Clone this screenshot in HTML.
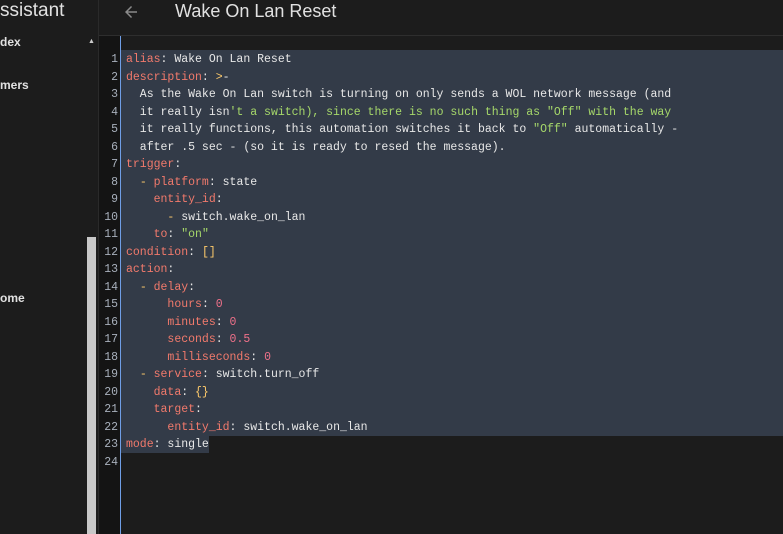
<!DOCTYPE html>
<html><head><style>
body{margin:0;width:783px;height:534px;overflow:hidden;background:#1c1c1c;font-family:"Liberation Sans",sans-serif;position:relative}
.side{position:absolute;left:0;top:0;width:98px;height:534px;background:#1c1c1c;border-right:1px solid #2a2a2a;color:#e1e1e1}
.hdr{position:absolute;left:99px;top:0;right:0;height:35px;background:#1c1c1c;border-bottom:1px solid #2e2e2e}
.sb{position:absolute;left:87px;top:237px;width:9px;height:297px;background:#c8c8c8}
.gut{position:absolute;left:99px;top:36px;width:21px;height:498px;background:#141414;border-right:1px solid #6f9ee6}
.code{position:absolute;left:126px;top:51px;font-family:"Liberation Mono",monospace;font-size:11.5px;line-height:17.52px;color:#e8e8e8;white-space:pre}
.ln{position:absolute;left:99px;top:51px;width:19px;text-align:right;font-family:"Liberation Mono",monospace;font-size:11.5px;line-height:17.52px;color:#a8b0bc;white-space:pre}
.sel{position:absolute;left:121px;top:50px;width:662px;height:386px;background:#333b48}
.sel2{position:absolute;left:121px;top:436px;width:88px;height:17px;background:#333b48}
.k{color:#f27a6c}.s{color:#a6d86a}.n{color:#f0718a}.y{color:#ffcb6b}
</style></head><body>
<div class="side">
<div style="position:absolute;left:0;top:0;font-size:19px;color:#e1e1e1;line-height:22px">ssistant</div>
<div style="position:absolute;left:0;top:35px;font-size:12px;font-weight:bold">dex</div>
<div style="position:absolute;left:88px;top:38px;font-size:7px;color:#ccc">▲</div>
<div style="position:absolute;left:0;top:78px;font-size:12px;font-weight:bold">mers</div>
<div style="position:absolute;left:0;top:291px;font-size:12px;font-weight:bold">ome</div>
<div class="sb"></div>
</div>
<div class="hdr">
<svg style="position:absolute;left:23px;top:3px" width="18" height="18" viewBox="0 0 24 24"><path d="M20 11H7.8l5.6-5.6L12 4l-8 8 8 8 1.4-1.4L7.8 13H20z" fill="#8a8a8a"/></svg>
<div style="position:absolute;left:76px;top:1px;font-size:18px;color:#e1e1e1">Wake On Lan Reset</div>
</div>
<div class="gut"></div>
<div class="sel"></div><div class="sel2"></div>
<div class="ln">1
2
3
4
5
6
7
8
9
10
11
12
13
14
15
16
17
18
19
20
21
22
23
24</div>
<div class="code"><span class="k">alias</span>: Wake On Lan Reset
<span class="k">description</span>: <span class="y">&gt;</span>-
  As the Wake On Lan switch is turning on only sends a WOL network message (and
  it really isn<span class="s">'t a switch), since there is no such thing as "Off" with the way</span>
  it really functions, this automation switches it back to <span class="s">"Off"</span> automatically -
  after .5 sec - (so it is ready to resed the message).
<span class="k">trigger</span>:
  <span class="y">-</span> <span class="k">platform</span>: state
    <span class="k">entity_id</span>:
      <span class="y">-</span> switch.wake_on_lan
    <span class="k">to</span>: <span class="s">"on"</span>
<span class="k">condition</span>: <span class="y">[]</span>
<span class="k">action</span>:
  <span class="y">-</span> <span class="k">delay</span>:
      <span class="k">hours</span>: <span class="n">0</span>
      <span class="k">minutes</span>: <span class="n">0</span>
      <span class="k">seconds</span>: <span class="n">0.5</span>
      <span class="k">milliseconds</span>: <span class="n">0</span>
  <span class="y">-</span> <span class="k">service</span>: switch.turn_off
    <span class="k">data</span>: <span class="y">{}</span>
    <span class="k">target</span>:
      <span class="k">entity_id</span>: switch.wake_on_lan
<span class="k">mode</span>: single
</div>
</body></html>
